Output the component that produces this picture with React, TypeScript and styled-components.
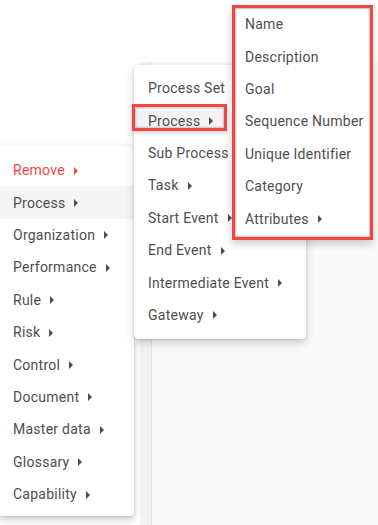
import React from "react";
import styled, { createGlobalStyle } from "styled-components";

const GlobalStyle = createGlobalStyle`
  html, body {
    margin: 0;
    padding: 0;
    background: #ffffff;
  }

  body {
    font-family: Roboto, "Liberation Sans", Arial, sans-serif;
    -webkit-font-smoothing: antialiased;
  }
`;

interface IItem {
  label: string;
  sub?: boolean;
  danger?: boolean;
  active?: boolean;
  framed?: boolean;
}

const rootItems: IItem[] = [
  { label: "Remove", sub: true, danger: true },
  { label: "Process", sub: true, active: true },
  { label: "Organization", sub: true },
  { label: "Performance", sub: true },
  { label: "Rule", sub: true },
  { label: "Risk", sub: true },
  { label: "Control", sub: true },
  { label: "Document", sub: true },
  { label: "Master data", sub: true },
  { label: "Glossary", sub: true },
  { label: "Capability", sub: true },
];

const processItems: IItem[] = [
  { label: "Process Set" },
  { label: "Process", sub: true, framed: true },
  { label: "Sub Process" },
  { label: "Task", sub: true },
  { label: "Start Event", sub: true },
  { label: "End Event", sub: true },
  { label: "Intermediate Event", sub: true },
  { label: "Gateway", sub: true },
];

const attributeItems: IItem[] = [
  { label: "Name" },
  { label: "Description" },
  { label: "Goal" },
  { label: "Sequence Number" },
  { label: "Unique Identifier" },
  { label: "Category" },
  { label: "Attributes", sub: true },
];

const Caret: React.FC = () => (
  <CaretIcon viewBox="0 0 4 8" width="4" height="8" aria-hidden="true">
    <path d="M0 0 L4 4 L0 8 Z" fill="currentColor" />
  </CaretIcon>
);

const MenuList: React.FC<{ items: IItem[]; inset: number }> = ({
  items,
  inset,
}) => (
  <>
    {items.map((item) => (
      <Item
        key={item.label}
        $inset={inset}
        $danger={item.danger}
        $active={item.active}
        $framed={item.framed}
      >
        <Label>{item.label}</Label>
        {item.sub && <Caret />}
      </Item>
    ))}
  </>
);

export default function App() {
  return (
    <>
      <GlobalStyle />
      <Page>
        <Header />
        <Workspace>
          <Blank />
          <Strip />
          <Canvas />
        </Workspace>

        <Menu $left={-1} $top={146} $width={135} $pad="8px 0 6px" $z={1}>
          <MenuList items={rootItems} inset={14} />
        </Menu>

        <Menu $left={134} $top={65} $width={172} $pad="7px 0 8px" $z={2}>
          <MenuList items={processItems} inset={14} />
        </Menu>

        <Menu
          $left={232}
          $top={5}
          $width={141}
          $pad="0 0 2px"
          $z={3}
          $outlined
        >
          <MenuList items={attributeItems} inset={10} />
        </Menu>
      </Page>
    </>
  );
}

const Page = styled.div`
  position: relative;
  display: flex;
  flex-direction: column;

  width: 378px;
  height: 525px;
  overflow: hidden;

  background: #ffffff;
`;

const Header = styled.div`
  height: 62px;
  flex-shrink: 0;
`;

const Workspace = styled.div`
  display: flex;
  flex: 1;
`;

const Blank = styled.div`
  width: 140px;
  background: #ffffff;
`;

const Strip = styled.div`
  width: 11px;
  background: #f3f3f3;
  border-right: 1px solid #e6e6e6;
`;

const Canvas = styled.div`
  flex: 1;
  background: #fafafa;
`;

const Menu = styled.div<{
  $left: number;
  $top: number;
  $width: number;
  $pad: string;
  $z: number;
  $outlined?: boolean;
}>`
  position: absolute;
  left: ${(p) => p.$left}px;
  top: ${(p) => p.$top}px;
  z-index: ${(p) => p.$z};
  box-sizing: border-box;
  width: ${(p) => p.$width}px;
  padding: ${(p) => p.$pad};

  display: flex;
  flex-direction: column;

  background: #ffffff;
  border-radius: ${(p) => (p.$outlined ? "0" : "4px")};
  border: ${(p) => (p.$outlined ? "3px solid #f04646" : "none")};
  box-shadow: ${(p) =>
    p.$outlined
      ? "inset 0 0 2px 1px rgba(0, 0, 0, 0.25), 0 4px 8px rgba(0, 0, 0, 0.2)"
      : "0 4px 10px rgba(0, 0, 0, 0.18), 0 1px 3px rgba(0, 0, 0, 0.12)"};
`;

const Item = styled.div<{
  $inset: number;
  $danger?: boolean;
  $active?: boolean;
  $framed?: boolean;
}>`
  position: relative;
  isolation: isolate;
  display: flex;
  align-items: center;
  box-sizing: border-box;

  height: 32.4px;
  padding: 0 ${(p) => p.$inset}px;

  font-size: 14px;
  line-height: 16px;
  letter-spacing: 0.25px;
  white-space: nowrap;

  color: ${(p) => (p.$danger ? "#f44848" : "#4e4e4e")};
  background: ${(p) => (p.$active ? "#f5f5f5" : "transparent")};

  ${(p) =>
    p.$framed &&
    `
    &::before {
      content: "";
      position: absolute;
      left: -2px;
      top: 0;
      z-index: -1;
      box-sizing: border-box;
      width: 95px;
      height: 27px;
      background: #f3f3f3;
      border: 3px solid #f04646;
      box-shadow: inset 0 0 2px 1px rgba(0, 0, 0, 0.2), 0 2px 4px rgba(0, 0, 0, 0.18);
    }
  `}
`;

const Label = styled.span`
  display: block;
`;

const CaretIcon = styled.svg`
  flex-shrink: 0;
  margin-left: 9px;
  margin-top: 1px;
  color: inherit;
`;
